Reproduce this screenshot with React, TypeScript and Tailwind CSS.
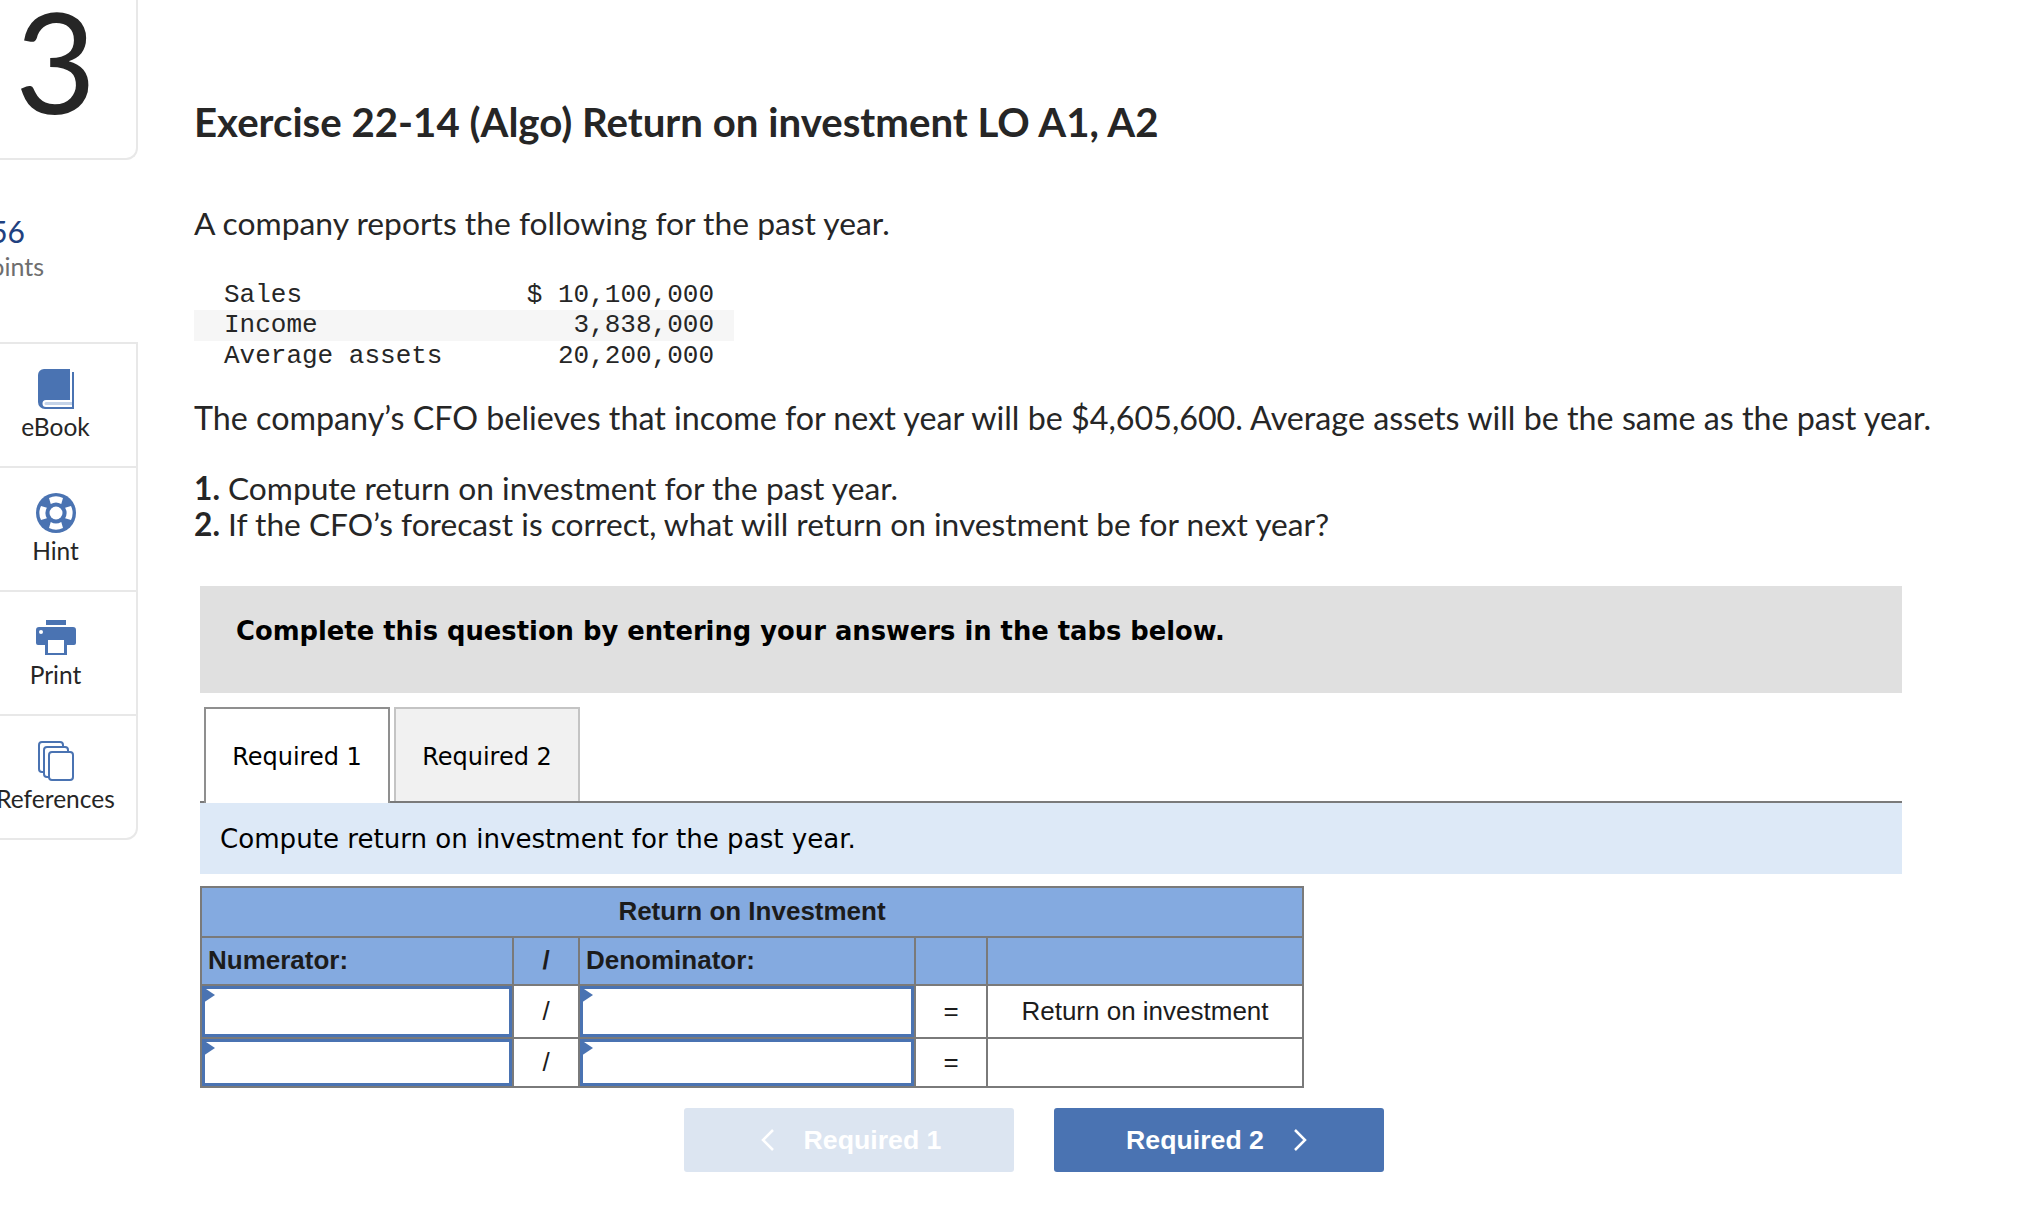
const sideItems = [
  { label: 'eBook', icon: <BookIcon /> },
  { label: 'Hint', icon: <HintIcon /> },
  { label: 'Print', icon: <PrintIcon /> },
  { label: 'References', icon: <RefsIcon /> },
];

function BookIcon() {
  return (
    <svg width="36" height="40" viewBox="0 0 36 40">
      <path d="M6 0h26v31H8a3.5 3.5 0 0 0 0 7h26V3h2v37H7a7 7 0 0 1-7-7V6a6 6 0 0 1 6-6z" fill="#4a73b2" />
      <path d="M8 33h26v3H8a1.5 1.5 0 0 1 0-3z" fill="#c4d3e8" />
    </svg>
  );
}

function HintIcon() {
  const wedge = 'M13 5A16.5 16.5 0 0 1 27 5L25.25 10.9A10.5 10.5 0 0 0 14.75 10.9Z';
  return (
    <svg width="40" height="40" viewBox="0 0 40 40">
      <circle cx="20" cy="20" r="20" fill="#4a73b2" />
      <path d={wedge} fill="#fff" />
      <path d={wedge} fill="#fff" transform="rotate(90 20 20)" />
      <path d={wedge} fill="#fff" transform="rotate(180 20 20)" />
      <path d={wedge} fill="#fff" transform="rotate(270 20 20)" />
      <circle cx="20" cy="20" r="6.5" fill="#fff" />
    </svg>
  );
}

function PrintIcon() {
  return (
    <svg width="40" height="35" viewBox="0 0 40 35">
      <rect x="10" y="0" width="20" height="5" fill="#4a73b2" />
      <path d="M3 7h34a3 3 0 0 1 3 3v13a2 2 0 0 1-2 2h-7v10H9V25H2a2 2 0 0 1-2-2V10a3 3 0 0 1 3-3z" fill="#4a73b2" />
      <circle cx="5" cy="12" r="2" fill="#fff" />
      <rect x="12" y="20" width="16" height="13" fill="#fff" />
    </svg>
  );
}

function RefsIcon() {
  return (
    <svg width="36" height="40" viewBox="0 0 36 40" fill="#fff" stroke="#4a73b2" strokeWidth="2">
      <rect x="1" y="1" width="24" height="30" rx="3" />
      <rect x="6" y="6" width="24" height="30" rx="3" />
      <rect x="11" y="11" width="24" height="28" rx="3" />
    </svg>
  );
}

function Caret() {
  return (
    <svg className="absolute left-[1px] top-[1px]" width="12" height="16" viewBox="0 0 12 16">
      <path d="M0 0l12 8-12 8z" fill="#4a73b2" />
    </svg>
  );
}

function InputCell() {
  return (
    <td className="relative border-2 border-[#7a7a7a] p-0">
      <div className="h-full border-[3px] border-[#4a73b2] bg-white" />
      <Caret />
    </td>
  );
}

export default function App() {
  return (
    <div className="flex h-[1218px] w-[2026px] overflow-hidden bg-white font-['Lato',sans-serif] text-[#262626]">
      <aside className="ml-[-25px] w-[163px] shrink-0">
        <div className="flex h-[160px] items-start justify-center rounded-br-xl border-r-2 border-b-2 border-[#e8e8e8]">
          <span className="mt-[-20px] text-[140px] leading-[1.15] font-normal">3</span>
        </div>
        <div className="mt-[53px] h-[129px]">
          <div className="text-right text-[30px] leading-[36px] text-[#1f4180] pr-[113px]">56</div>
          <div className="text-right text-[25px] leading-[34px] text-[#6e6e6e] pr-[94px]">points</div>
        </div>
        <div className="rounded-br-xl border-r-2 border-b-2 border-t-2 border-[#e8e8e8]">
          {sideItems.map((item, i) => (
            <div key={item.label} className={`flex flex-col items-center pt-[25px] ${i > 0 ? 'h-[124px] border-t-2 border-[#e8e8e8]' : 'h-[122px]'}`}>
              <div className="flex h-[40px] items-center">{item.icon}</div>
              <span className="mt-[3px] text-[24.5px] leading-[30px]">{item.label}</span>
            </div>
          ))}
        </div>
      </aside>

      <main className="ml-[56px] min-w-0 flex-1">
        <h1 className="mt-[98px] text-[40.2px] leading-[48px] font-bold">Exercise 22-14 (Algo) Return on investment LO A1, A2</h1>
        <p className="mt-[55px] text-[31.8px] leading-[44px]">A company reports the following for the past year.</p>

        <div className="mt-[35px] w-[540px] font-['Liberation_Mono',monospace] text-[26px] leading-[30.25px] text-[#262626]">
          <div className="flex justify-between pl-[30px] pr-[20px]"><span>Sales</span><span>$ 10,100,000</span></div>
          <div className="flex justify-between bg-[#f6f6f6] pl-[30px] pr-[20px]"><span>Income</span><span>3,838,000</span></div>
          <div className="flex justify-between pl-[30px] pr-[20px]"><span>Average assets</span><span>20,200,000</span></div>
        </div>

        <p className="mt-[25px] text-[32.25px] leading-[44px] whitespace-nowrap">The company’s CFO believes that income for next year will be $4,605,600. Average assets will be the same as the past year.</p>
        <p className="mt-[30px] text-[31.7px] leading-[36px] whitespace-nowrap"><b>1.</b> Compute return on investment for the past year.<br /><b>2.</b> If the CFO’s forecast is correct, what will return on investment be for next year?</p>

        <section className="ml-[6px] mt-[44px] w-[1702px]">
          <div className="h-[107px] bg-[#e0e0e0] pl-[36px] pt-[27px] font-['DejaVu_Sans',sans-serif] text-[25.8px] leading-[36px] font-bold text-black">
            Complete this question by entering your answers in the tabs below.
          </div>
          <div className="mt-[14px] flex gap-[4px] border-b-2 border-[#7a7a7a] pl-[4px] font-['DejaVu_Sans',sans-serif] text-[24px] text-black">
            <div className="mb-[-2px] flex h-[96px] w-[186px] items-center justify-center border-2 border-b-0 border-[#8f8f8f] bg-white pt-[2px]">Required 1</div>
            <div className="flex h-[94px] w-[186px] items-center justify-center border-2 border-b-0 border-[#c4c4c4] bg-[#f1f1f1] pt-[4px]">Required 2</div>
          </div>
          <div className="flex h-[71px] items-center bg-[#dde9f7] pl-[20px] pt-[3px] font-['DejaVu_Sans',sans-serif] text-[26.1px] text-black">
            Compute return on investment for the past year.
          </div>

          <table className="mt-[12px] h-[200px] w-[1104px] table-fixed border-collapse border-2 border-[#7a7a7a] font-['Liberation_Sans',sans-serif] text-[26px] text-[#1c1c1c]">
            <colgroup>
              <col className="w-[312px]" />
              <col className="w-[66px]" />
              <col className="w-[336px]" />
              <col className="w-[72px]" />
              <col />
            </colgroup>
            <tbody>
              <tr className="h-[50px] bg-[#84aae0] font-bold">
                <td colSpan={5} className="border-2 border-[#7a7a7a] text-center">Return on Investment</td>
              </tr>
              <tr className="h-[48px] bg-[#84aae0] font-bold">
                <td className="border-2 border-[#7a7a7a] pl-[6px]">Numerator:</td>
                <td className="border-2 border-[#7a7a7a] text-center">/</td>
                <td className="border-2 border-[#7a7a7a] pl-[6px]">Denominator:</td>
                <td className="border-2 border-[#7a7a7a]" />
                <td className="border-2 border-[#7a7a7a]" />
              </tr>
              <tr className="h-[53px]">
                <InputCell />
                <td className="border-2 border-[#7a7a7a] text-center">/</td>
                <InputCell />
                <td className="border-2 border-[#7a7a7a] text-center">=</td>
                <td className="border-2 border-[#7a7a7a] text-center">Return on investment</td>
              </tr>
              <tr className="h-[49px]">
                <InputCell />
                <td className="border-2 border-[#7a7a7a] text-center">/</td>
                <InputCell />
                <td className="border-2 border-[#7a7a7a] text-center">=</td>
                <td className="border-2 border-[#7a7a7a]" />
              </tr>
            </tbody>
          </table>

          <div className="mt-[20px] ml-[484px] flex gap-[40px] font-['Liberation_Sans',sans-serif] text-[26.7px] font-bold text-white">
            <button className="flex h-[64px] w-[330px] items-center justify-center gap-[28px] rounded-[3px] bg-[#dce5f1] pl-[3px]">
              <svg width="16" height="26" viewBox="0 0 16 26" fill="none" stroke="#fff" strokeWidth="2.5"><path d="M13 3 3 13l10 10" /></svg>
              Required 1
            </button>
            <button className="flex h-[64px] w-[330px] items-center justify-center gap-[28px] rounded-[3px] bg-[#4a73b2] pr-[4px]">
              Required 2
              <svg width="16" height="26" viewBox="0 0 16 26" fill="none" stroke="#fff" strokeWidth="2.5"><path d="m3 3 10 10L3 23" /></svg>
            </button>
          </div>
        </section>
      </main>
    </div>
  );
}
